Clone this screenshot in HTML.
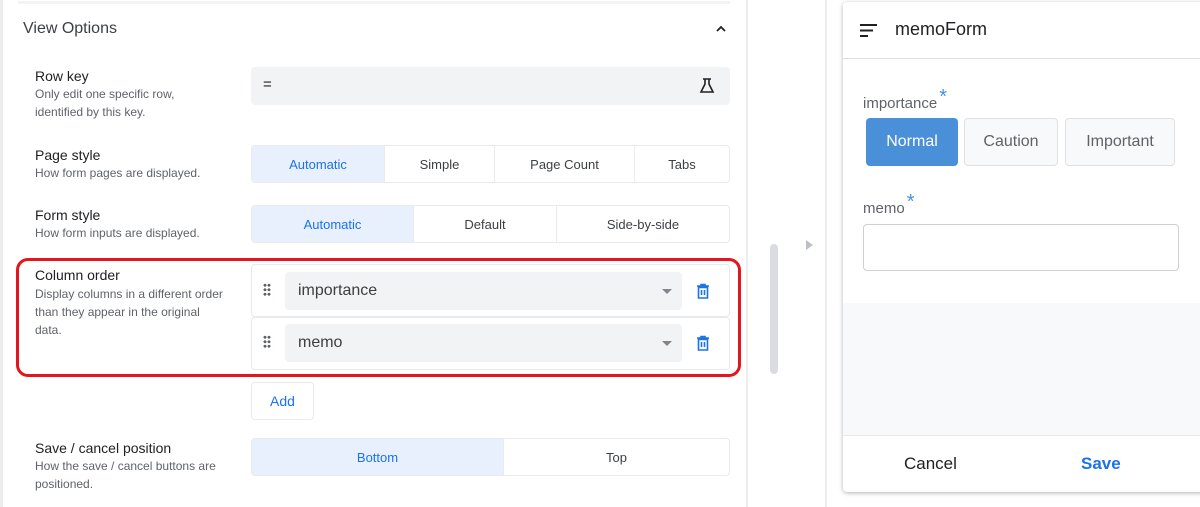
<!DOCTYPE html>
<html><head><style>
*{box-sizing:border-box;margin:0;padding:0}
body{width:1200px;height:507px;background:#fff;font-family:"Liberation Sans",Arial,sans-serif;position:relative;overflow:hidden;color:#202124}
.a{position:absolute}
.t{font-size:14px;color:#202124}
.d{font-size:12px;color:#5f6368;line-height:18px}
.seg{position:absolute;display:flex;border:1px solid #e8eaed;border-radius:4px;overflow:hidden;height:38px}
.seg div{display:flex;align-items:center;justify-content:center;font-size:13px;color:#3c4043;border-left:1px solid #e8eaed;height:100%}
.seg div:first-child{border-left:none;background:#e8f0fe;color:#1a73e8}
.sel{position:absolute;background:#f1f3f4;border-radius:4px;height:38px;font-size:16px;color:#3c4043;padding:10px 13px}
.sel:after{content:"";position:absolute;right:10px;top:17px;border:5px solid transparent;border-top-color:#80868b}
.dots{position:absolute;width:8px;height:14px;background:radial-gradient(circle,#5f6368 1.4px,transparent 1.6px) 0 0/4px 4.5px}
.ast{color:#4a90d9;font-size:20px;position:relative;top:-5px;margin-left:2px}
</style></head><body>
<div class="a" style="left:0;top:0;width:3px;height:507px;background:#ececec"></div>
<div class="a" style="left:18px;top:1px;width:712px;height:3px;background:#f1f3f4"></div>
<div class="a" style="left:746px;top:0;width:2px;height:507px;background:#eceded"></div>
<div class="a" style="left:825px;top:0;width:2px;height:507px;background:#eceded"></div>
<div class="a" style="left:770px;top:244px;width:8px;height:130px;background:#dadce0;border-radius:4px"></div>
<div class="a" style="left:806px;top:240px;border:5px solid transparent;border-left:7px solid #bdc1c6"></div>

<div class="a" style="left:23px;top:20px;font-size:16px;color:#3c4043">View Options</div>
<svg class="a" style="left:714px;top:24px" width="14" height="10"><path d="M3 7l4-4 4 4" stroke="#202124" stroke-width="1.8" fill="none"/></svg>

<div class="a t" style="left:35px;top:68px">Row key</div>
<div class="a d" style="left:35px;top:85px">Only edit one specific row,<br>identified by this key.</div>
<div class="a" style="left:251px;top:67px;width:479px;height:38px;background:#f1f3f4;border-radius:4px"></div>
<div class="a" style="left:263px;top:76px;font-size:15px">=</div>
<svg class="a" style="left:698px;top:77px" width="18" height="18"><path d="M5 2h8M7 2v5L3 15h12L11 7V2" stroke="#202124" stroke-width="1.6" fill="none"/></svg>

<div class="a t" style="left:35px;top:147px">Page style</div>
<div class="a d" style="left:35px;top:164px">How form pages are displayed.</div>
<div class="seg" style="left:251px;top:145px;width:479px"><div style="width:132px">Automatic</div><div style="width:110px">Simple</div><div style="width:140px">Page Count</div><div style="flex:1">Tabs</div></div>

<div class="a t" style="left:35px;top:207px">Form style</div>
<div class="a d" style="left:35px;top:224px">How form inputs are displayed.</div>
<div class="seg" style="left:251px;top:205px;width:479px"><div style="width:161px">Automatic</div><div style="width:143px">Default</div><div style="flex:1">Side-by-side</div></div>

<div class="a t" style="left:35px;top:267px">Column order</div>
<div class="a d" style="left:35px;top:285px">Display columns in a different order<br>than they appear in the original<br>data.</div>
<div class="a" style="left:251px;top:264px;width:479px;height:53px;border:1px solid #e8eaed;border-radius:4px"></div>
<div class="a" style="left:251px;top:317px;width:479px;height:53px;border:1px solid #e8eaed;border-radius:4px"></div>
<div class="dots" style="left:263px;top:283px"></div>
<div class="dots" style="left:263px;top:335px"></div>
<div class="sel" style="left:285px;top:272px;width:397px">importance</div>
<div class="sel" style="left:285px;top:324px;width:397px">memo</div>
<svg class="a" style="left:695px;top:283px" width="16" height="16"><path d="M2 3h12M6 3V1.5h4V3M3.5 4.5h9V15h-9z M6.5 7v5M9.5 7v5" stroke="#1a73e8" stroke-width="1.6" fill="none"/></svg>
<svg class="a" style="left:695px;top:335px" width="16" height="16"><path d="M2 3h12M6 3V1.5h4V3M3.5 4.5h9V15h-9z M6.5 7v5M9.5 7v5" stroke="#1a73e8" stroke-width="1.6" fill="none"/></svg>
<div class="a" style="left:16px;top:258px;width:725px;height:119px;border:3px solid #e3151f;border-radius:12px"></div>

<div class="a" style="left:251px;top:382px;width:63px;height:38px;border:1px solid #e8eaed;border-radius:4px;color:#1a73e8;font-size:14px;text-align:center;line-height:36px">Add</div>

<div class="a t" style="left:35px;top:440px">Save / cancel position</div>
<div class="a d" style="left:35px;top:457px">How the save / cancel buttons are<br>positioned.</div>
<div class="seg" style="left:251px;top:438px;width:479px"><div style="width:251px">Bottom</div><div style="flex:1">Top</div></div>

<div class="a" style="left:843px;top:2px;width:370px;height:490px;background:#fff;border-radius:4px;box-shadow:0 1px 4px rgba(0,0,0,.3);overflow:hidden">
 <svg class="a" style="left:16px;top:21px" width="20" height="16"><path d="M1 2h17M1 7.5h13M1 13h8" stroke="#202124" stroke-width="2"/></svg>
 <div class="a" style="left:52px;top:17px;font-size:18px;color:#202124">memoForm</div>
 <div class="a" style="left:0;top:56px;width:370px;height:1px;background:#e0e0e0"></div>
 <div class="a" style="left:20px;top:89px;font-size:15px;color:#5f6368">importance<span class="ast">*</span></div>
 <div class="a" style="left:23px;top:116px;width:92px;height:48px;background:#4a90d9;border-radius:4px;color:#fff;font-size:16px;text-align:center;line-height:48px">Normal</div>
 <div class="a" style="left:121px;top:116px;width:94px;height:48px;background:#f8f9fa;border:1px solid #e0e0e0;border-radius:4px;color:#5f6368;font-size:16px;text-align:center;line-height:46px">Caution</div>
 <div class="a" style="left:222px;top:116px;width:110px;height:48px;background:#f8f9fa;border:1px solid #e0e0e0;border-radius:4px;color:#5f6368;font-size:16px;text-align:center;line-height:46px">Important</div>
 <div class="a" style="left:20px;top:194px;font-size:15px;color:#5f6368">memo<span class="ast">*</span></div>
 <div class="a" style="left:20px;top:222px;width:316px;height:47px;border:1px solid #d0d0d0;border-radius:4px"></div>
 <div class="a" style="left:0;top:301px;width:370px;height:132px;background:#f8f9fa"></div>
 <div class="a" style="left:0;top:433px;width:370px;height:1px;background:#e8e8e8"></div>
 <div class="a" style="left:61px;top:452px;font-size:17px;color:#202124">Cancel</div>
 <div class="a" style="left:238px;top:452px;font-size:17px;color:#1a73e8;font-weight:bold">Save</div>
</div>
</body></html>
